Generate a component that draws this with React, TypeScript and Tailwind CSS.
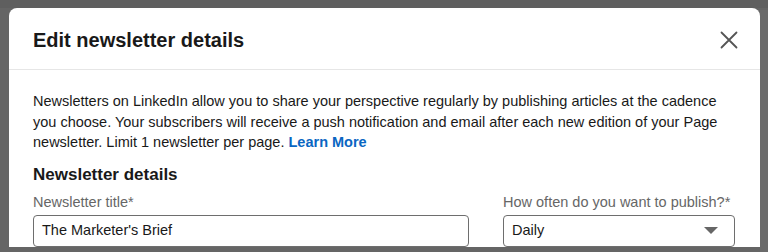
import React from "react";

export default function App() {
  return (
    <div className="relative h-[252px] w-[768px] overflow-hidden bg-[#656565]" style={{ fontFamily: '"Liberation Sans", Arial, sans-serif' }}>
      {/* faded page behind the overlay */}
      <div className="absolute left-0 top-0 h-[8px] w-full bg-[#5f5f5f]" />
      <div className="absolute right-0 top-[10px] h-[242px] w-[8px] bg-[#6b6b6b]" />

      <div className="absolute left-[9px] top-[8px] w-[751px] rounded-t-[8px] bg-white text-[#191919]">
        <div className="flex h-[62px] items-center justify-between border-b border-[#e6e6e6] pl-[24px] pr-[19px] pt-[2px]">
          <h2 className="text-[20px] font-semibold leading-none">Edit newsletter details</h2>
          <button className="flex h-[24px] w-[24px] items-center justify-center text-[#555]">
            <svg width="20" height="20" viewBox="0 0 20 20" fill="none" stroke="currentColor" strokeWidth="1.8" strokeLinecap="round">
              <path d="M2.5 2.5l15 15M17.5 2.5l-15 15" />
            </svg>
          </button>
        </div>

        <div className="px-[24px] pt-[21px]">
          <p className="text-[14.5px] leading-[20.5px]">
            Newsletters on LinkedIn allow you to share your perspective regularly by publishing articles at the cadence
            you choose. Your subscribers will receive a push notification and email after each new edition of your Page
            newsletter. Limit 1 newsletter per page.{" "}
            <a className="font-bold text-[#0a66c2]">Learn More</a>
          </p>

          <h3 className="mt-[10px] text-[17px] font-semibold leading-[24px]">Newsletter details</h3>

          <div className="mt-[5px] flex gap-[34px]">
            <div className="flex w-[436px] flex-col">
              <label className="text-[14.5px] leading-[20px] text-[#666]">Newsletter title*</label>
              <div className="mt-[3px] flex h-[32px] items-center rounded-[4px] border border-[#6e6e6e] px-[8px] text-[14.5px]">
                The Marketer's Brief
              </div>
            </div>
            <div className="flex w-[232px] flex-col">
              <label className="text-[14.5px] leading-[20px] text-[#666]">How often do you want to publish?*</label>
              <div className="mt-[3px] flex h-[32px] items-center justify-between rounded-[4px] border border-[#6e6e6e] pl-[8px] pr-[16px] text-[14.5px]">
                <span>Daily</span>
                <svg width="14" height="8" viewBox="0 0 14 8">
                  <path d="M0 0h14L7 7z" fill="#666" />
                </svg>
              </div>
            </div>
          </div>
        </div>
      </div>
    </div>
  );
}
